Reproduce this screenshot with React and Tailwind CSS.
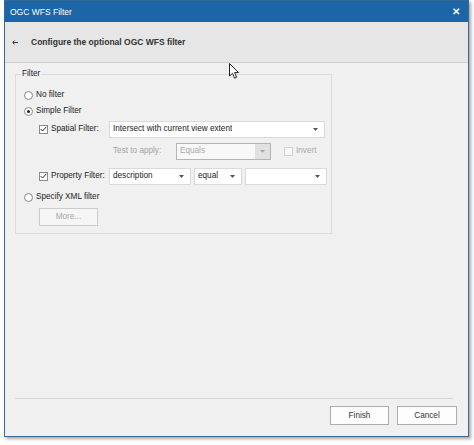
import React from "react";

const Chevron = ({ color = "#555" }) => (
  <svg width="5" height="3" viewBox="0 0 5 3" className="shrink-0">
    <path d="M0 0 L5 0 L2.5 3 Z" fill={color} />
  </svg>
);

function Dropdown({ value, width }) {
  return (
    <div
      className="h-[17px] bg-white border border-[#d9d9d9] flex items-center justify-between pl-[3px] pr-[6px] text-[#222] shrink-0"
      style={{ width }}
    >
      <span className="truncate">{value}</span>
      <Chevron />
    </div>
  );
}

function Radio({ checked, label }) {
  return (
    <div className="h-[16px] flex items-center pl-[8px]">
      <span className="w-[9px] h-[9px] rounded-full border border-[#8a8a8a] bg-white flex items-center justify-center">
        {checked && <span className="w-[3px] h-[3px] rounded-full bg-[#222]" />}
      </span>
      <span className="ml-[3px] text-[#222]">{label}</span>
    </div>
  );
}

function Check({ checked, disabled }) {
  return (
    <span
      className={
        "w-[9px] h-[9px] border flex items-center justify-center shrink-0 " +
        (disabled ? "border-[#cfcfcf] bg-[#f7f7f7]" : "border-[#8a8a8a] bg-white")
      }
    >
      {checked && (
        <svg width="7" height="6" viewBox="0 0 7 6">
          <path d="M0.6 3 L2.6 5 L6.4 0.8" fill="none" stroke="#333" strokeWidth="1" />
        </svg>
      )}
    </span>
  );
}

function Cursor() {
  return (
    <svg width="11" height="17" viewBox="0 0 11 17" className="absolute left-[229px] top-[63px]">
      <path d="M0.5 0.5 L0.5 13 L3.5 10.3 L5.6 15.2 L7.6 14.3 L5.6 9.6 L9.5 9.6 Z" fill="#fff" stroke="#222" strokeWidth="1" />
    </svg>
  );
}

export default function App() {
  return (
    <div className="w-[474px] h-[445px] bg-white relative pl-[4px] font-['Liberation_Sans',Arial,sans-serif] text-[8.2px] leading-[10px]">
      <div className="w-[465px] h-[437px] border border-[#3a6890] flex flex-col shadow-[2px_2px_3px_rgba(0,0,0,0.35)]">
        {/* title bar */}
        <div className="h-[21px] bg-[#1a66a8] flex items-center justify-between pl-[5px] pr-[8px] text-white text-[8.5px] shrink-0">
          <span>OGC WFS Filter</span>
          <span className="text-[10px] font-bold">✕</span>
        </div>

        {/* wizard header */}
        <div className="h-[41px] bg-[#e6e6e6] border-b border-[#d2d2d2] flex items-center pl-[7px] shrink-0 text-[#333]">
          <svg width="6" height="5" viewBox="0 0 6 5">
            <path d="M6 2.5 H1 M2.6 0.6 L0.7 2.5 L2.6 4.4" fill="none" stroke="#333" strokeWidth="1" />
          </svg>
          <span className="ml-[13px] font-bold text-[8.5px]">Configure the optional OGC WFS filter</span>
        </div>

        {/* body */}
        <div className="flex-1 bg-[#f0f0f0] flex flex-col">
          <fieldset className="ml-[10px] mt-[6px] w-[317px] border border-[#dcdcdc] pt-[8px] pb-[7px]">
            <legend className="ml-[5px] px-[1px] text-[#222] leading-[10px]">Filter</legend>

            <Radio label="No filter" />
            <Radio checked label="Simple Filter" />

            <div className="mt-[1px] h-[18px] flex items-center pl-[23px]">
              <div className="w-[70px] shrink-0 whitespace-nowrap flex items-center">
                <Check checked />
                <span className="ml-[3px] text-[#222]">Spatial Filter:</span>
              </div>
              <Dropdown value="Intersect with current view extent" width={216} />
            </div>

            <div className="mt-[4px] h-[18px] flex items-center pl-[97px]">
              <span className="w-[63px] shrink-0 whitespace-nowrap text-[#a3a3a3]">Test to apply:</span>
              <div className="w-[95px] h-[17px] border border-[#b4b4b4] bg-[#f8f8f8] flex items-center justify-between text-[#a8a8a8]">
                <span className="pl-[3px]">Equals</span>
                <span className="w-[15px] h-[15px] bg-[#e1e1e1] flex items-center justify-center">
                  <Chevron color="#aaa" />
                </span>
              </div>
              <span className="ml-[13px]">
                <Check disabled />
              </span>
              <span className="ml-[3px] text-[#aaa]">Invert</span>
            </div>

            <div className="mt-[7px] h-[18px] flex items-center pl-[23px]">
              <div className="w-[70px] shrink-0 whitespace-nowrap flex items-center">
                <Check checked />
                <span className="ml-[3px] text-[#222]">Property Filter:</span>
              </div>
              <div className="flex items-center gap-[3px]">
                <Dropdown value="description" width={82} />
                <Dropdown value="equal" width={48} />
                <Dropdown value="" width={82} />
              </div>
            </div>

            <div className="mt-[4px]">
              <Radio label="Specify XML filter" />
            </div>

            <div className="mt-[3px] pl-[23px]">
              <div className="w-[59px] h-[18px] border border-[#cccccc] bg-[#f5f5f5] flex items-center justify-center text-[#a5a5a5]">
                More...
              </div>
            </div>
          </fieldset>

          <div className="flex-1" />

          <div className="ml-[10px] mr-[15px] h-px bg-[#d6d6d6]" />
          <div className="flex justify-end gap-[8px] mt-[7px] mr-[11px] mb-[11px]">
            <div className="w-[59px] h-[19px] bg-[#fdfdfd] border border-[#adadad] flex items-center justify-center text-[#333]">
              Finish
            </div>
            <div className="w-[60px] h-[19px] bg-[#fdfdfd] border border-[#adadad] flex items-center justify-center text-[#333]">
              Cancel
            </div>
          </div>
        </div>
      </div>
      <Cursor />
    </div>
  );
}
